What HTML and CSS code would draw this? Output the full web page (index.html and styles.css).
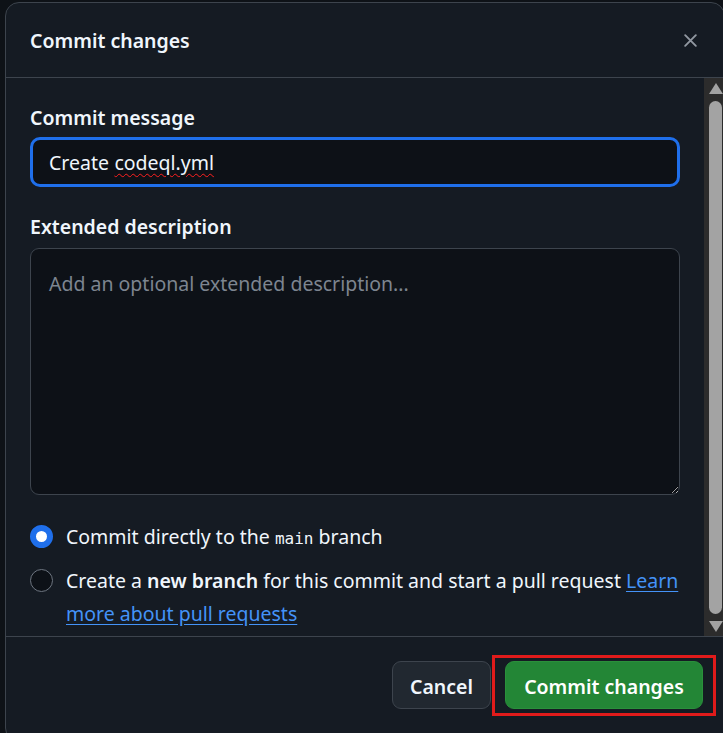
FILE: index.html
```html
<!DOCTYPE html>
<html lang="en">
<head>
    <meta charset="UTF-8">
    <meta name="viewport" content="width=device-width, initial-scale=1.0">
    <title>Commit changes</title>
    <link rel="stylesheet" href="styles.css">
</head>
<body>
    <div id="dialog">
        <div id="dialogHeader">
            <h1>Commit changes</h1>
            <button class="closeBtn" aria-label="Close">
                <svg width="16" height="16" viewBox="0 0 16 16"><path d="M3.5 3.5l9 9M12.5 3.5l-9 9" stroke="currentColor" stroke-width="1.6" stroke-linecap="round"/></svg>
            </button>
        </div>
        <div id="dialogBody">
            <div id="content">
                <label class="fieldLabel">Commit message</label>
                <div class="messageInput">Create <span class="typo">codeql.yml</span></div>

                <label class="fieldLabel second">Extended description</label>
                <textarea class="description" placeholder="Add an optional extended description..."></textarea>

                <div class="choices">
                    <div class="choice">
                        <span class="radio checked"></span>
                        <p>Commit directly to the <code>main</code> branch</p>
                    </div>
                    <div class="choice">
                        <span class="radio"></span>
                        <p>Create a <b>new branch</b> for this commit and start a pull request <a href="#">Learn more about pull requests</a></p>
                    </div>
                </div>
            </div>
            <div class="scrollbar">
                <span class="arrow up"></span>
                <span class="thumb"></span>
                <span class="arrow down"></span>
            </div>
        </div>
        <div id="dialogFooter">
            <button class="btn cancelBtn">Cancel</button>
            <button class="btn commitBtn">Commit changes</button>
        </div>
    </div>
</body>
</html>
```

FILE: styles.css
```css
* {
    box-sizing: border-box;
}

body {
    margin: 0;
    padding: 2px 0 0 5px;
    height: 733px;
    overflow: hidden;
    background-color: #0e1217;
    font-family: 'Noto Sans', 'Open Sans', sans-serif;
    color: #f0f6fc;
}

#dialog {
    width: 720px;
    height: 740px;
    background-color: #151b23;
    border: 1px solid #3d444d;
    border-radius: 14px;
    display: flex;
    flex-direction: column;
    overflow: hidden;
}

#dialogHeader {
    display: flex;
    justify-content: space-between;
    align-items: center;
    height: 75px;
    padding: 0 20px 0 24px;
    border-bottom: 1px solid #3d444d;
}

#dialogHeader h1 {
    margin: 0;
    font-size: 19.5px;
    font-weight: 600;
}

.closeBtn {
    background: none;
    border: none;
    color: #9198a1;
    padding: 4px;
    display: flex;
    cursor: pointer;
}

.closeBtn svg {
    width: 19px;
    height: 19px;
}

#dialogBody {
    display: flex;
    height: 559px;
    border-bottom: 1px solid #3d444d;
}

#content {
    flex: 1;
    padding: 25px 24px 0 24px;
    display: flex;
    flex-direction: column;
}

.fieldLabel {
    font-size: 19.5px;
    font-weight: 600;
    line-height: 30px;
}

.fieldLabel.second {
    margin-top: 25px;
}

.messageInput {
    margin-top: 4px;
    height: 50px;
    border: 3px solid #1f6feb;
    border-radius: 10px;
    background-color: #0d1117;
    padding: 0 16px;
    display: flex;
    align-items: center;
    font-size: 19.5px;
    color: #f0f6fc;
}

.messageInput .typo {
    margin-left: 0.28em;
    text-decoration: underline wavy #ff2020;
    text-decoration-thickness: 1px;
    text-underline-offset: 3px;
}

.description {
    margin-top: 6px;
    height: 247px;
    border: 1px solid #3d444d;
    border-radius: 9px;
    background-color: #0d1117;
    padding: 21px 18px;
    font-family: inherit;
    font-size: 19.5px;
    color: #f0f6fc;
    resize: vertical;
}

.description::placeholder {
    color: #7d8590;
}

.description:focus {
    outline: none;
}

.choices {
    margin-top: 25px;
    display: flex;
    flex-direction: column;
    gap: 9px;
}

.choice {
    display: flex;
    align-items: flex-start;
    gap: 13px;
}

.choice p {
    margin: 0;
    font-size: 19.5px;
    line-height: 33px;
    color: #f0f6fc;
}

.choice code {
    font-family: 'DejaVu Sans Mono', 'Liberation Mono', monospace;
    font-size: 16px;
}

.choice b {
    font-weight: 600;
}

.choice a {
    color: #4493f8;
    text-decoration: underline;
    text-underline-offset: 3px;
}

.radio {
    flex: none;
    width: 23px;
    height: 23px;
    margin-top: 5px;
    border-radius: 50%;
    border: 1px solid #6e7681;
    background-color: #0d1117;
}

.radio.checked {
    border: 6px solid #1f6feb;
    background-color: #ffffff;
}

.scrollbar {
    width: 20px;
    background-color: #2c2c2c;
    display: flex;
    flex-direction: column;
    align-items: center;
    padding: 5px 0 4px 3px;
    gap: 7px;
}

.thumb {
    flex: 1;
    width: 13px;
    border-radius: 7px;
    background-color: #a3a3a3;
}

.arrow {
    width: 0;
    height: 0;
    border-left: 7px solid transparent;
    border-right: 7px solid transparent;
}

.arrow.up {
    border-bottom: 11px solid #a3a3a3;
}

.arrow.down {
    border-top: 11px solid #a3a3a3;
}

#dialogFooter {
    display: flex;
    justify-content: flex-end;
    align-items: flex-start;
    gap: 14px;
    padding: 24px 21px 0 0;
}

.btn {
    height: 48px;
    border-radius: 9px;
    font-family: inherit;
    font-size: 19.5px;
    font-weight: 600;
    color: #f0f6fc;
    padding: 3px 17px 0;
    white-space: nowrap;
    cursor: pointer;
}

.cancelBtn {
    width: 99px;
    background-color: #212830;
    border: 1px solid #3d444d;
}

.commitBtn {
    position: relative;
    background-color: #238636;
    border: 1px solid #2a903b;
    color: #ffffff;
    width: 198px;
    padding: 3px 0 0;
}

.commitBtn::after {
    content: "";
    position: absolute;
    top: -7px;
    bottom: -8px;
    left: -14px;
    right: -14px;
    border: 3px solid #e01b1b;
}
```
